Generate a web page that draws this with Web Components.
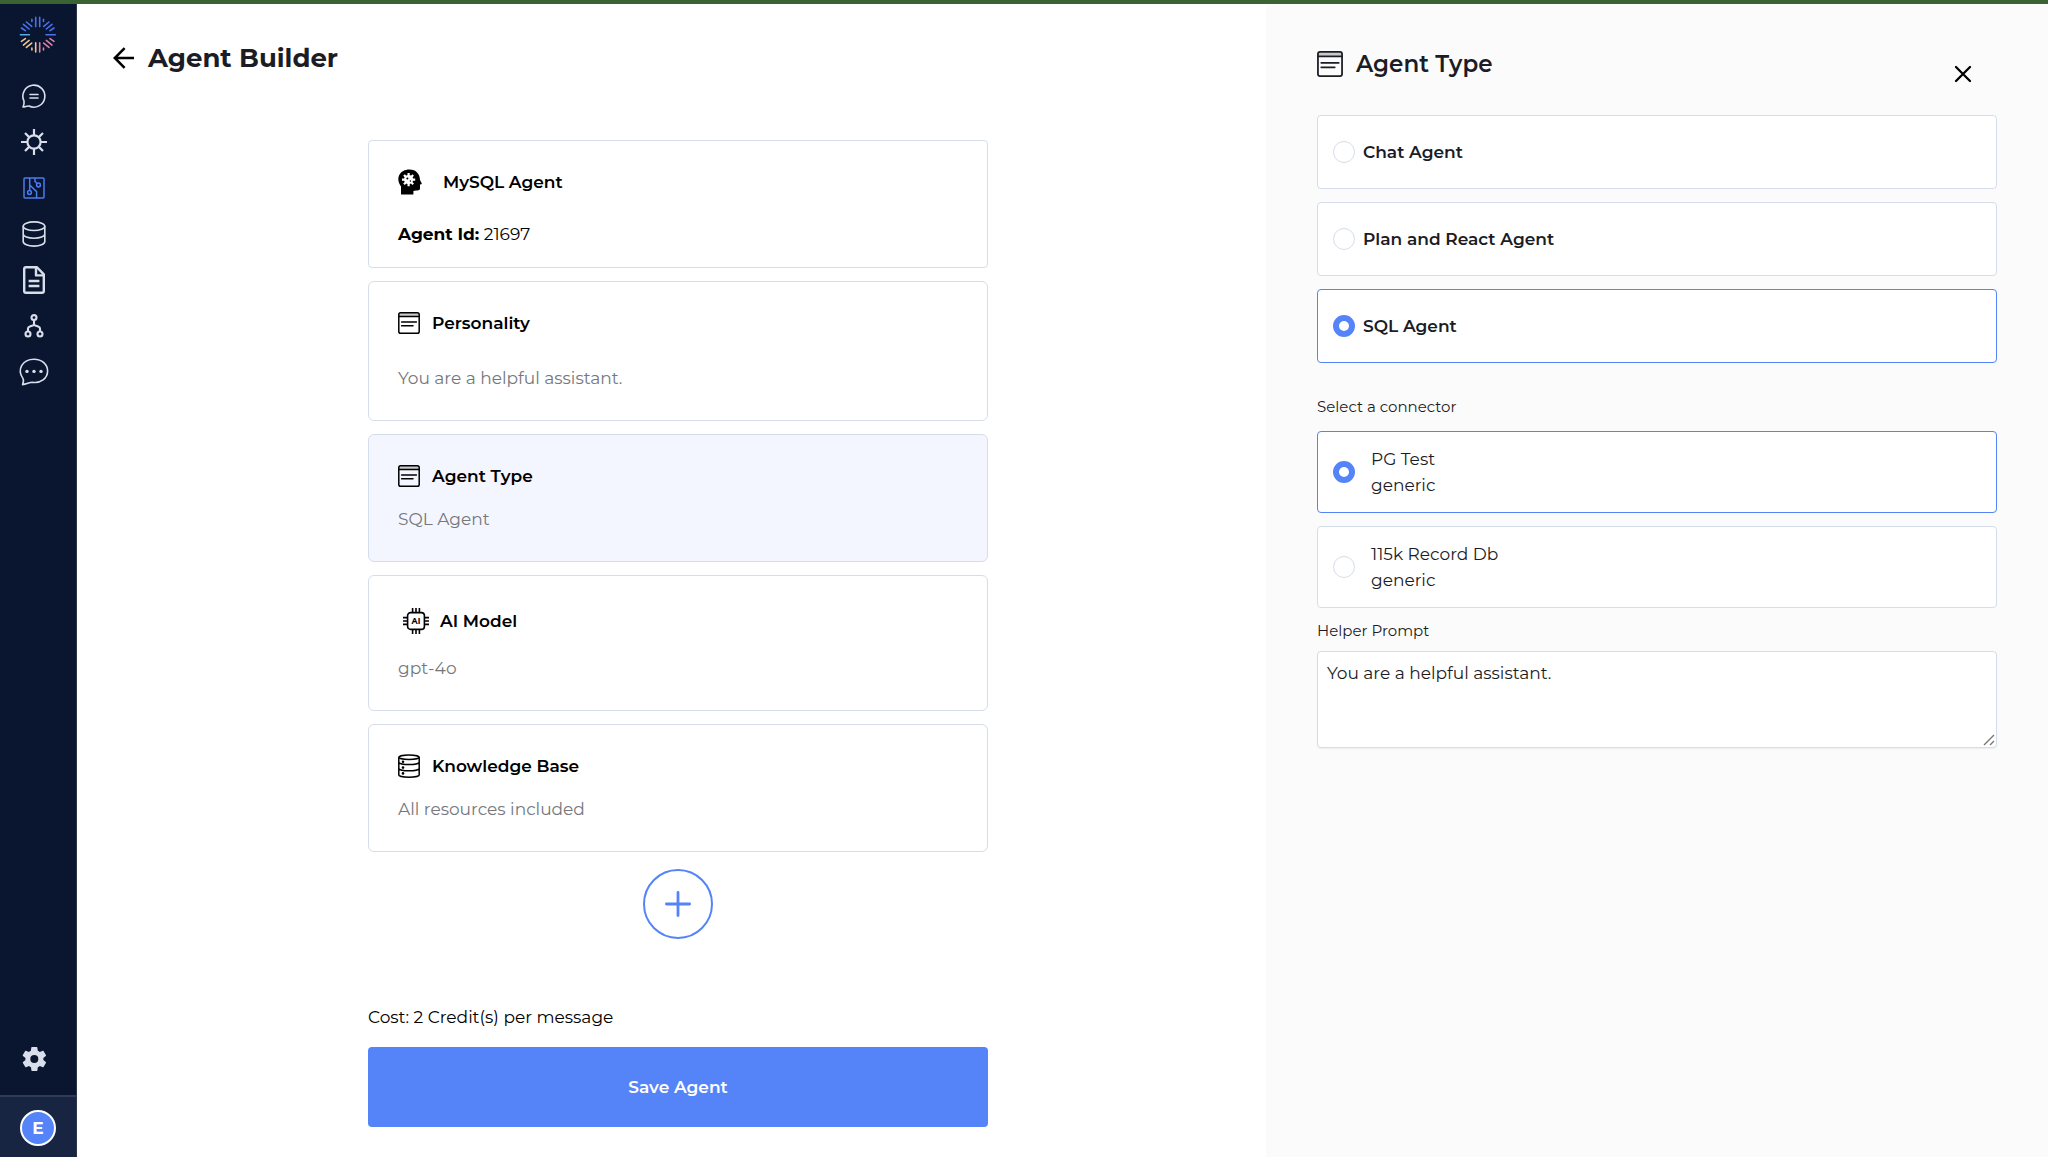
<!DOCTYPE html>
<html lang="en">
<head>
<meta charset="utf-8">
<title>Agent Builder</title>
<meta name="viewport" content="width=device-width, initial-scale=1">
<style>
	:root {
		--blue: #5484f7;
		--line: #d6ddea;
		--navy: #0a1530;
		--ink: #1b1c25;
		--muted: #75777d;
	}

	body {
		margin: 0;
		font: 17px/24px Montserrat, Inter, "Open Sans", sans-serif;
		color: #000;
		background: #fff;
	}
</style>
</head>
<body>
<ab-app>
	<ab-sidebar slot="nav"></ab-sidebar>

	<ab-builder slot="main">
		<ab-card class="agent" icon="head" heading="MySQL Agent"><b>Agent Id:</b> 21697</ab-card>
		<ab-card class="roomy" icon="panel" heading="Personality">You are a helpful assistant.</ab-card>
		<ab-card active icon="panel" heading="Agent Type">SQL Agent</ab-card>
		<ab-card class="model" icon="chip" heading="AI Model">gpt-4o</ab-card>
		<ab-card icon="stack" heading="Knowledge Base">All resources included</ab-card>
	</ab-builder>

	<ab-panel slot="aside" heading="Agent Type">
		<ab-radio slot="types" name="type" value="chat">Chat Agent</ab-radio>
		<ab-radio slot="types" name="type" value="plan">Plan and React Agent</ab-radio>
		<ab-radio slot="types" name="type" value="sql" checked>SQL Agent</ab-radio>
		<ab-radio slot="connectors" name="connector" value="pg" detail="generic" checked>PG Test</ab-radio>
		<ab-radio slot="connectors" name="connector" value="records" detail="generic">115k Record Db</ab-radio>
	</ab-panel>
</ab-app>

<script>
const rays = `
	<path d="M19.7 .4V9.6M23.5 2.4V4.4M23.7 9.3L29 5M26.3 12L32 7.3M30 13.7L34 11"/>
`;

const ICONS = {
	logo: [36, 36, `
		<g fill="none" stroke-width="1.6" stroke-linecap="round">
			<g stroke="#4a72f0">${rays}<path d="M26 17.7H35.3"/></g>
			<g stroke="#4a72f0" transform="matrix(-1 0 0 1 35.4 0)">${rays}</g>
			<g stroke="#dd7fa6" transform="matrix(1 0 0 -1 0 35.4)">${rays}</g>
			<g stroke="#f0c493" transform="matrix(-1 0 0 -1 35.4 35.4)">${rays}</g>
			<path stroke="#59a8e8" d="M.4 17.7H9.4"/>
		</g>`],
	chat: [24, 24, `
		<g fill="none" stroke="currentColor" stroke-width="1.6" stroke-linecap="round" stroke-linejoin="round">
			<path d="M1 23C2 21 2.4 19.5 2 17A11 11 0 1 1 7 22C5 21.8 3 23 1 23Z"/>
			<path d="M8 10.5H16M8 14H16"/>
		</g>`],
	sun: [26, 26, `
		<g fill="none" stroke="currentColor" stroke-width="2.2">
			<circle cx="13" cy="13" r="6.6"/>
			<path d="M13 0V6.4M13 19.6V26M0 13H6.4M19.6 13H26M4 4L8.4 8.4M17.6 17.6L22 22M4 22L8.4 17.6M17.6 8.4L22 4"/>
		</g>`],
	circuit: [22, 22, `
		<g fill="none" stroke="currentColor" stroke-width="1.5">
			<rect x="1" y="1" width="20" height="20" rx="1"/>
			<circle cx="15.5" cy="8" r="1.9"/>
			<circle cx="6.5" cy="15.5" r="1.9"/>
			<path d="M12 1V4.5L14 6.6M6.7 1V13.6M6.7 8L13.6 14.6V21"/>
		</g>`],
	database: [24, 26, `
		<g fill="none" stroke="currentColor" stroke-width="1.6">
			<ellipse cx="12" cy="5.2" rx="10.8" ry="4.3"/>
			<path d="M1.2 5.2V20.6C1.2 23.2 6 25.1 12 25.1S22.8 23.2 22.8 20.6V5.2M1.2 13C1.2 15.4 6 17.2 12 17.2S22.8 15.4 22.8 13"/>
		</g>`],
	doc: [22, 28, `
		<g fill="none" stroke="currentColor" stroke-width="2.4" stroke-linejoin="round">
			<path d="M14 1.2H3Q1.2 1.2 1.2 3V25Q1.2 26.8 3 26.8H19Q20.8 26.8 20.8 25V8.4Z"/>
			<path d="M13 1.6V9.4H20.4M5.6 15H16.4M5.6 20H16.4"/>
		</g>`],
	branch: [20, 24, `
		<g fill="none" stroke="currentColor" stroke-width="2.1">
			<circle cx="10" cy="3.6" r="2.5"/>
			<circle cx="4" cy="20" r="2.5"/>
			<circle cx="16" cy="20" r="2.5"/>
			<path d="M10 6.2V11M4 17.4V14.6Q4 13 5.8 12.5L10 11L14.2 12.5Q16 13 16 14.6V17.4"/>
		</g>`],
	bubble: [30, 28, `
		<path fill="none" stroke="currentColor" stroke-width="1.6" stroke-linejoin="round" d="M3.6 26.6C4.6 24 5 22.4 4 20.6C-2.5 11.4 3.6 1.2 15 1.2C23 1.2 28.6 6.4 28.6 13C28.6 20.4 21.6 25.6 13.4 24.2C10.4 24.2 7.6 26.2 3.6 26.6Z"/>
		<g fill="currentColor"><circle cx="8" cy="13.4" r="1.7"/><circle cx="15" cy="13.4" r="1.7"/><circle cx="22" cy="13.4" r="1.7"/></g>`],
	gear: [28, 28, `
		<path fill="currentColor" d="M23.3 15.1c.1-.4.1-.7.1-1.1s0-.7-.1-1.1l2.5-2c.2-.2.3-.5.1-.8l-2.4-4.1c-.1-.3-.4-.4-.7-.3l-3 1.2c-.6-.5-1.3-.9-2-1.2l-.5-3.1c0-.3-.3-.5-.6-.5h-4.8c-.3 0-.5.2-.6.5l-.4 3.1c-.7.3-1.4.7-2 1.2l-3-1.2c-.3-.1-.6 0-.7.3l-2.4 4.1c-.1.3-.1.6.2.8l2.5 2c-.1.3-.1.7-.1 1.1s0 .7.1 1.1l-2.5 2c-.2.2-.3.5-.1.8l2.4 4.1c.1.3.4.4.7.3l3-1.2c.6.5 1.3.9 2 1.2l.4 3.1c.1.3.3.5.6.5h4.8c.3 0 .5-.2.6-.5l.4-3.1c.7-.3 1.4-.7 2-1.2l3 1.2c.3.1.6 0 .7-.3l2.4-4.1c.1-.3.1-.6-.1-.8zM14.3 18a4 4 0 1 1 0-8 4 4 0 0 1 0 8z"/>`],
	back: [22, 22, `
		<path fill="none" stroke="currentColor" stroke-width="2.5" d="M21 11H2M11.6 1.2L1.8 11L11.6 20.8"/>`],
	close: [18, 18, `
		<path fill="none" stroke="currentColor" stroke-width="2.3" stroke-linecap="round" d="M2 2L16 16M16 2L2 16"/>`],
	plus: [26, 26, `
		<path fill="none" stroke="currentColor" stroke-width="2.8" stroke-linecap="round" d="M13 1.4V24.6M1.4 13H24.6"/>`],
	head: [24, 26, `
		<path fill="currentColor" d="M3 25V17.5C-3 9 2 .6 11.4 .6C18.4 .6 22 5.6 22 11L23.8 14.4Q24 15.2 22 15.4V19.4Q22 21.4 18 21.6L15.4 22V25Q15.4 25.6 14.6 25.6H3.6Q3 25.6 3 25Z"/>
		<circle cx="10.6" cy="10.6" r="4.6" fill="#fff"/>
		<path stroke="#fff" stroke-width="2.2" d="M10.6 4V17.2M4 10.6H17.2M6 6L15.2 15.2M6 15.2L15.2 6"/>
		<circle cx="9.4" cy="9.6" r="1" fill="currentColor"/>
		<circle cx="12.4" cy="12" r=".8" fill="currentColor"/>`],
	panel: [22, 22, `
		<path fill="#c9c9c9" d="M1 1H21V4H1Z"/>
		<g fill="none" stroke="currentColor" stroke-width="1.5" stroke-linecap="round">
			<rect x=".8" y=".8" width="20.4" height="20.4" rx="1.8"/>
			<path d="M1 4.6H21M3.6 10H18.4M3.6 13.8H15"/>
		</g>`],
	chip: [28, 28, `
		<g fill="none" stroke="currentColor" stroke-width="1.6">
			<rect x="5.6" y="5.6" width="16.8" height="16.8" rx="3"/>
			<path d="M10.6 1V5M14 1V5M17.4 1V5M10.6 23V27M14 23V27M17.4 23V27M1 10.6H5M1 14H5M1 17.4H5M23 10.6H27M23 14H27M23 17.4H27"/>
		</g>
		<text x="14" y="17" text-anchor="middle" font-size="8" font-weight="700" fill="currentColor">AI</text>`],
	stack: [22, 24, `
		<g fill="none" stroke="currentColor" stroke-width="1.5">
			<ellipse cx="11" cy="3.2" rx="10.2" ry="2.2"/>
			<path d="M.8 3.2V21C.8 22.2 5 23.2 11 23.2S21.2 22.2 21.2 21V3.2M.8 8.4C1.6 9.8 6 10.6 11 10.6S20.4 9.8 21.2 8.4M.8 14.6C1.6 16 6 16.8 11 16.8S20.4 16 21.2 14.6"/>
		</g>
		<g fill="currentColor"><circle cx="5" cy="7.8" r="1.3"/><circle cx="5" cy="13.6" r="1.3"/><circle cx="5" cy="19.4" r="1.3"/></g>`]
};

class AbElement extends HTMLElement {
	constructor() {
		super();
		this.attachShadow({ mode: 'open' });
	}

	connectedCallback() {
		this.shadowRoot.innerHTML = `<style>${this.styles()}</style>${this.template()}`;
	}
}

class AbIcon extends AbElement {
	styles() {
		return `
			:host { display: inline-flex; flex: none; align-items: center; justify-content: center; }
			svg { display: block; overflow: visible; }
		`;
	}

	template() {
		const [width, height, shape] = ICONS[this.getAttribute('name')];
		const size = this.getAttribute('size') || width;

		return `
			<svg width="${size}" height="${Math.round(size * height / width)}" viewBox="0 0 ${width} ${height}" aria-hidden="true">${shape}</svg>
		`;
	}
}

class AbApp extends AbElement {
	styles() {
		return `
			:host {
				display: grid;
				grid-template-columns: 77px minmax(0, 1189fr) minmax(0, 782fr);
				min-height: 100vh;
				box-sizing: border-box;
				border-top: 4px solid #3a6233;
			}
			::slotted(*) { min-width: 0; }
		`;
	}

	template() {
		return `
			<slot name="nav"></slot>
			<slot name="main"></slot>
			<slot name="aside"></slot>
		`;
	}
}

class AbSidebar extends AbElement {
	styles() {
		return `
			:host {
				display: flex;
				flex-direction: column;
				box-sizing: border-box;
				border-right: 1px solid #2b3550;
				background: var(--navy);
				color: #d9dfea;
			}
			.logo { display: flex; justify-content: center; padding: 13px 0 20px; }
			nav { display: flex; flex-direction: column; flex: 1; width: 68px; }
			nav a { display: flex; align-items: center; justify-content: center; height: 46px; color: inherit; }
			nav a.active { color: #4c7bee; }
			nav a.settings { margin-top: auto; margin-bottom: 13px; }
			footer {
				display: flex;
				justify-content: center;
				padding: 13px 0 11px;
				border-top: 2px solid #303c57;
				background: #172543;
			}
			button {
				width: 36px;
				height: 36px;
				padding: 0;
				border: 2px solid #fff;
				border-radius: 50%;
				background: var(--blue);
				color: #fff;
				font: inherit;
				font-weight: 700;
			}
		`;
	}

	template() {
		return `
			<a class="logo" href="#" aria-label="Home"><ab-icon name="logo"></ab-icon></a>
			<nav>
				<a href="#chat" aria-label="Chat"><ab-icon name="chat"></ab-icon></a>
				<a href="#skills" aria-label="Skills"><ab-icon name="sun"></ab-icon></a>
				<a href="#agents" aria-label="Agents" class="active"><ab-icon name="circuit"></ab-icon></a>
				<a href="#data" aria-label="Data"><ab-icon name="database"></ab-icon></a>
				<a href="#documents" aria-label="Documents"><ab-icon name="doc"></ab-icon></a>
				<a href="#flows" aria-label="Flows"><ab-icon name="branch"></ab-icon></a>
				<a href="#messages" aria-label="Messages"><ab-icon name="bubble"></ab-icon></a>
				<a href="#settings" aria-label="Settings" class="settings"><ab-icon name="gear"></ab-icon></a>
			</nav>
			<footer><button type="button">E</button></footer>
		`;
	}
}

class AbBuilder extends AbElement {
	styles() {
		return `
			:host { display: block; padding: 36px 23px 30px 36px; }
			header { display: flex; align-items: center; gap: 13px; height: 36px; }
			header a { display: flex; color: #000; }
			h1 { margin: 0; font-size: 26px; line-height: 36px; font-weight: 700; color: var(--ink); }
			.column { display: flex; flex-direction: column; gap: 13px; max-width: 620px; margin: 64px auto 0; }
			.add {
				display: flex;
				align-items: center;
				justify-content: center;
				align-self: center;
				width: 70px;
				height: 70px;
				margin-top: 4px;
				padding: 0;
				border: 2px solid var(--blue);
				border-radius: 50%;
				background: none;
				color: var(--blue);
			}
			.cost { margin: 53px 0 5px; }
			.save {
				height: 80px;
				border: 0;
				border-radius: 4px;
				background: var(--blue);
				color: #fff;
				font: inherit;
				font-weight: 600;
			}
		`;
	}

	template() {
		return `
			<header>
				<a href="#agents" aria-label="Back"><ab-icon name="back"></ab-icon></a>
				<h1>Agent Builder</h1>
			</header>
			<div class="column">
				<slot></slot>
				<button class="add" type="button" aria-label="Add"><ab-icon name="plus"></ab-icon></button>
				<p class="cost">Cost: 2 Credit(s) per message</p>
				<button class="save" type="button">Save Agent</button>
			</div>
		`;
	}
}

class AbCard extends AbElement {
	styles() {
		return `
			:host {
				display: block;
				padding: 29px 29px 30px;
				border: 1px solid var(--line);
				border-radius: 6px;
				background: #fff;
			}
			:host([active]) { background: #f3f6ff; }
			.head { display: flex; align-items: center; gap: 12px; height: 24px; margin-bottom: 19px; }
			h2 { margin: 0; font-size: inherit; font-weight: 600; }
			p { margin: 0; color: var(--muted); }
			:host(.agent) { padding-bottom: 21px; border-radius: 4px; }
			:host(.agent) .head { gap: 21px; margin-bottom: 28px; }
			:host(.agent) p { color: #000; }
			:host(.roomy) .head { margin-bottom: 31px; }
			:host(.model) .head { gap: 6px; height: 32px; }
			:host(.model) ab-icon { width: 36px; }
		`;
	}

	template() {
		return `
			<div class="head">
				<ab-icon name="${this.getAttribute('icon')}"></ab-icon>
				<h2>${this.getAttribute('heading')}</h2>
			</div>
			<p><slot></slot></p>
		`;
	}
}

class AbPanel extends AbElement {
	styles() {
		return `
			:host { display: block; padding: 41px 51px; background: #fbfbfb; color: var(--ink); }
			header { display: flex; align-items: center; gap: 13px; height: 38px; margin-bottom: 32px; }
			h2 { flex: 1; margin: 0; font-size: 23px; line-height: 36px; font-weight: 600; }
			header button {
				display: flex;
				align-items: flex-end;
				align-self: stretch;
				margin-right: 25px;
				padding: 1px 0 0;
				border: 0;
				background: none;
				color: #000;
			}
			fieldset { display: flex; flex-direction: column; gap: 13px; min-width: 0; margin: 0; padding: 0; border: 0; }
			legend, .label { display: block; padding: 0; font-size: 15px; line-height: 20px; }
			legend { margin-bottom: 14px; }
			.connectors { margin: 34px 0 13px; }
			textarea {
				display: block;
				box-sizing: border-box;
				width: 100%;
				height: 97px;
				margin-top: 10px;
				padding: 9px;
				border: 1px solid var(--line);
				border-radius: 4px;
				background: #fff;
				box-shadow: 0 1px 2px rgba(0, 0, 0, .06);
				color: inherit;
				font: inherit;
			}
			textarea::-webkit-resizer {
				background: url("data:image/svg+xml,%3Csvg xmlns='http://www.w3.org/2000/svg' width='15' height='15' fill='none' stroke='%23777' stroke-width='1.4'%3E%3Cpath d='M3 13L13 3M9 13L13 9'/%3E%3C/svg%3E") no-repeat right bottom;
			}
		`;
	}

	template() {
		return `
			<header>
				<ab-icon name="panel" size="26"></ab-icon>
				<h2>${this.getAttribute('heading')}</h2>
				<button type="button" aria-label="Close"><ab-icon name="close"></ab-icon></button>
			</header>
			<fieldset aria-label="Agent type"><slot name="types"></slot></fieldset>
			<fieldset class="connectors">
				<legend>Select a connector</legend>
				<slot name="connectors"></slot>
			</fieldset>
			<label class="label" for="prompt">Helper Prompt</label>
			<textarea id="prompt">You are a helpful assistant.</textarea>
		`;
	}
}

class AbRadio extends AbElement {
	connectedCallback() {
		super.connectedCallback();
		this.shadowRoot.querySelector('input').addEventListener('change', () => this.select());
	}

	// native radios don't group across shadow roots, so clear the others by hand
	select() {
		const name = this.getAttribute('name');

		this.parentElement.querySelectorAll(`ab-radio[name="${name}"]`).forEach((radio) => {
			radio.toggleAttribute('checked', radio === this);
			radio.shadowRoot.querySelector('input').checked = radio === this;
		});
	}

	styles() {
		return `
			:host { display: block; border: 1px solid var(--line); border-radius: 4px; background: #fff; font-weight: 600; }
			:host([checked]) { border-color: var(--blue); }
			:host([detail]) { font-weight: 400; }
			label { display: flex; align-items: center; gap: 8px; min-height: 72px; padding: 0 15px; }
			:host([detail]) label { gap: 16px; min-height: 80px; line-height: 26px; }
			input {
				appearance: none;
				flex: none;
				box-sizing: border-box;
				width: 22px;
				height: 22px;
				margin: 0;
				border: 1px solid var(--line);
				border-radius: 50%;
				background: #fff;
			}
			input:checked { border: 6px solid var(--blue); }
			.detail { display: block; }
		`;
	}

	template() {
		const checked = this.hasAttribute('checked') ? 'checked' : '';
		const detail = this.getAttribute('detail');

		return `
			<label>
				<input type="radio" name="${this.getAttribute('name')}" value="${this.getAttribute('value')}" ${checked}>
				<span><slot></slot>${detail ? `<span class="detail">${detail}</span>` : ''}</span>
			</label>
		`;
	}
}

customElements.define('ab-icon', AbIcon);
customElements.define('ab-app', AbApp);
customElements.define('ab-sidebar', AbSidebar);
customElements.define('ab-builder', AbBuilder);
customElements.define('ab-card', AbCard);
customElements.define('ab-panel', AbPanel);
customElements.define('ab-radio', AbRadio);
</script>
</body>
</html>
